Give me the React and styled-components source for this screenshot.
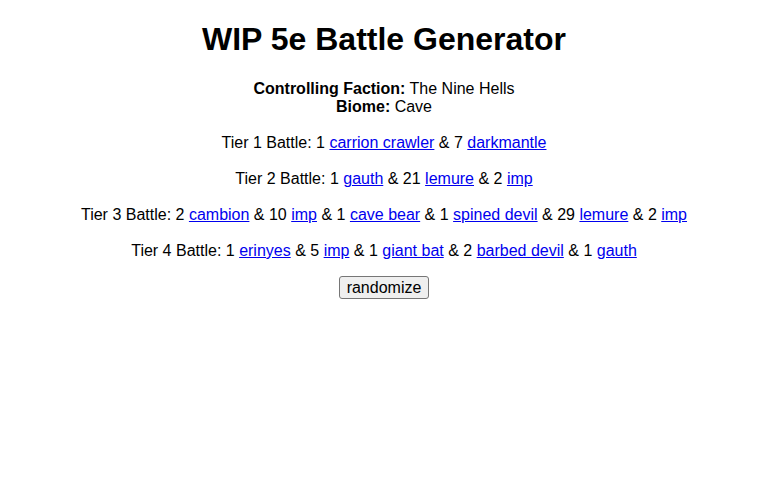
import styled, { createGlobalStyle } from 'styled-components'

const GlobalStyle = createGlobalStyle`
  body {
    margin: 0 8px;
    background: #ffffff;
    color: #000000;
    font-family: "Liberation Sans", Arial, sans-serif;
  }
`

const Page = styled.div`
  text-align: center;
  font-size: 16px;
`

const Title = styled.h1`
  font-size: 32px;
  font-weight: bold;
  margin: 21.44px 0;
`

const Info = styled.p`
  margin: 16px 0 17px;
`

const TierLine = styled.p`
  margin: 16px 0;
  line-height: 20px;
`

const MonsterLink = styled.a`
  color: #0000ee;
  text-decoration: underline;
`

const Button = styled.button`
  font-family: "Liberation Sans", Arial, sans-serif;
  font-size: 16px;
  color: #000;
  background: #efefef;
  border: 1px solid #767676;
  border-radius: 3px;
  padding: 1px 7px;
  margin-top: -1px;
  line-height: 19px;
  cursor: pointer;
`

const battles = [
  { tier: 1, groups: [[1, 'carrion crawler'], [7, 'darkmantle']] },
  { tier: 2, groups: [[1, 'gauth'], [21, 'lemure'], [2, 'imp']] },
  {
    tier: 3,
    groups: [[2, 'cambion'], [10, 'imp'], [1, 'cave bear'], [1, 'spined devil'], [29, 'lemure'], [2, 'imp']],
  },
  {
    tier: 4,
    groups: [[1, 'erinyes'], [5, 'imp'], [1, 'giant bat'], [2, 'barbed devil'], [1, 'gauth']],
  },
]

const Tier = ({ tier, groups }) => (
  <TierLine>
    Tier {tier} Battle:{' '}
    {groups.map(([count, name], i) => (
      <span key={i}>
        {i > 0 && ' & '}
        {count} <MonsterLink href="#">{name}</MonsterLink>
      </span>
    ))}
  </TierLine>
)

export default function App() {
  return (
    <Page>
      <GlobalStyle />
      <Title>WIP 5e Battle Generator</Title>
      <Info>
        <b>Controlling Faction:</b> The Nine Hells
        <br />
        <b>Biome:</b> Cave
      </Info>
      {battles.map((b) => (
        <Tier key={b.tier} {...b} />
      ))}
      <Button>randomize</Button>
    </Page>
  )
}
